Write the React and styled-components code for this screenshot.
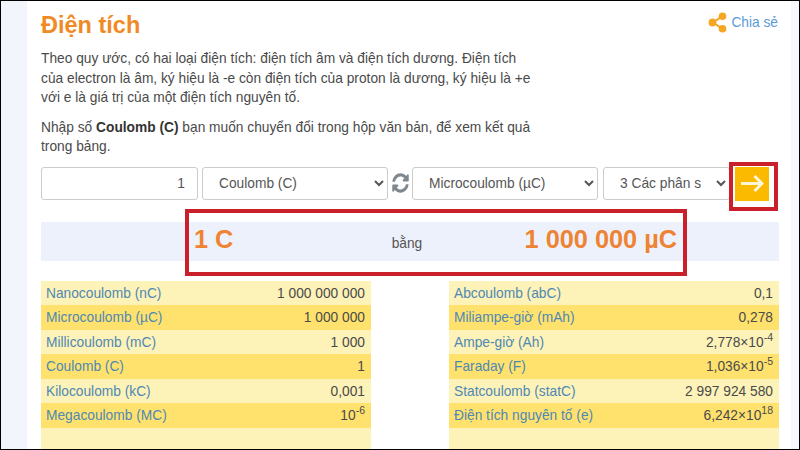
import React from 'react';
import styled, { createGlobalStyle } from 'styled-components';
import { FaSyncAlt } from 'react-icons/fa';

const GlobalStyle = createGlobalStyle`
  html, body {
    margin: 0;
    padding: 0;
    background: #fff;
  }
  body {
    font-family: "Liberation Sans", Arial, sans-serif;
  }
`;

const leftRows = [
  ['Nanocoulomb (nC)', '1 000 000 000'],
  ['Microcoulomb (µC)', '1 000 000'],
  ['Millicoulomb (mC)', '1 000'],
  ['Coulomb (C)', '1'],
  ['Kilocoulomb (kC)', '0,001'],
  ['Megacoulomb (MC)', <>10<sup>-6</sup></>],
];

const rightRows = [
  ['Abcoulomb (abC)', '0,1'],
  ['Miliampe-giờ (mAh)', '0,278'],
  ['Ampe-giờ (Ah)', <>2,778×10<sup>-4</sup></>],
  ['Faraday (F)', <>1,036×10<sup>-5</sup></>],
  ['Statcoulomb (statC)', '2 997 924 580'],
  ['Điện tích nguyên tố (e)', <>6,242×10<sup>18</sup></>],
];

function ShareIcon() {
  return (
    <svg width="19" height="21" viewBox="0 0 19 21">
      <path d="M5 10.5 L14.5 4.2 M5 10.5 L14.5 16.8" stroke="#f5a623" strokeWidth="2" />
      <circle cx="4.5" cy="10.5" r="3.9" fill="#f5a623" />
      <circle cx="14.5" cy="4.2" r="3.8" fill="#f5a623" />
      <circle cx="14.5" cy="16.8" r="3.8" fill="#f5a623" />
    </svg>
  );
}

function ArrowIcon() {
  return (
    <svg width="23" height="17" viewBox="0 0 23 17" fill="none" stroke="#fff6d6" strokeWidth="3">
      <path d="M0 8.5 H21" />
      <path d="M13.5 1 L21 8.5 L13.5 16" />
    </svg>
  );
}

function UnitTable({ rows }) {
  return (
    <Table>
      {rows.map(([name, value]) => (
        <Row key={name}>
          <UnitName>{name}</UnitName>
          <UnitValue>{value}</UnitValue>
        </Row>
      ))}
      <Filler />
    </Table>
  );
}

export default function App() {
  return (
    <>
      <GlobalStyle />
      <Frame>
        <Gutter />
        <Content>
          <Header>
            <Title>Điện tích</Title>
            <ShareLink>
              <ShareIcon />
              Chia sẻ
            </ShareLink>
          </Header>
          <Paragraph>
            Theo quy ước, có hai loại điện tích: điện tích âm và điện tích dương. Điện tích<br />
            của electron là âm, ký hiệu là -e còn điện tích của proton là dương, ký hiệu là +e<br />
            với e là giá trị của một điện tích nguyên tố.
          </Paragraph>
          <Paragraph>
            Nhập số <b>Coulomb (C)</b> bạn muốn chuyển đổi trong hộp văn bản, để xem kết quả<br />
            trong bảng.
          </Paragraph>
          <Controls>
            <NumberInput defaultValue="1" />
            <Select $width={186}>
              <option>Coulomb (C)</option>
            </Select>
            <SwapButton>
              <SwapIcon preserveAspectRatio="none" />
            </SwapButton>
            <Select $width={186}>
              <option>Microcoulomb (µC)</option>
            </Select>
            <Select $width={127}>
              <option>3 Các phân số</option>
            </Select>
            <GoButton>
              <ArrowIcon />
            </GoButton>
          </Controls>
          <ResultBar>
            <ResultValue>1 C</ResultValue>
            <ResultWord>bằng</ResultWord>
            <ResultValue>1 000 000 µC</ResultValue>
          </ResultBar>
          <Tables>
            <UnitTable rows={leftRows} />
            <UnitTable rows={rightRows} />
          </Tables>
        </Content>
        <RightGutter />
        <ResultHighlight />
        <ButtonHighlight />
      </Frame>
    </>
  );
}

const Frame = styled.div`
  position: relative;
  box-sizing: border-box;
  display: flex;
  width: 800px;
  height: 450px;
  overflow: hidden;
  border: 1px solid #000;
  background: #fff;
`;

const Gutter = styled.div`
  flex: 0 0 26px;
  background: #f3f5fd;
`;

const RightGutter = styled.div`
  flex: 0 0 8px;
  margin-left: auto;
  background: #f7f8fe;
`;

const Content = styled.main`
  flex: 0 0 738px;
  margin-left: 14px;
  color: #4a4a4a;
`;

const Header = styled.header`
  display: flex;
  justify-content: space-between;
  align-items: flex-start;
  height: 48px;
  padding: 11px 1px 0 0;
  box-sizing: border-box;
`;

const Title = styled.h1`
  margin: -1px 0 0;
  font-size: 23.5px;
  line-height: 28px;
  font-weight: 700;
  color: #f08a24;
`;

const ShareLink = styled.a`
  display: flex;
  align-items: center;
  gap: 4px;
  font-size: 13.75px;
  line-height: 21px;
  color: #5b9bd5;
`;

const Paragraph = styled.p`
  margin: 0 0 10px;
  font-size: 13.75px;
  line-height: 19.6px;
  color: #4a4a4a;

  b {
    color: #333;
  }
`;

const Controls = styled.div`
  display: flex;
  align-items: flex-start;
  height: 33px;
  margin-top: 10px;
`;

const fieldBox = `
  box-sizing: border-box;
  height: 33px;
  border: 1px solid #ccc;
  border-radius: 3px;
  background: #fff;
  font-family: "Liberation Sans", Arial, sans-serif;
  font-size: 13.75px;
  color: #555;
`;

const NumberInput = styled.input`
  ${fieldBox}
  width: 157px;
  margin-right: 4px;
  padding: 0 12px;
  text-align: right;
`;

const Select = styled.select`
  ${fieldBox}
  width: ${(props) => props.$width}px;
  margin-right: 5px;
  padding: 0 12px;
`;

const SwapButton = styled.span`
  display: flex;
  justify-content: center;
  align-items: center;
  width: 24px;
  height: 33px;
  margin-left: -5px;
`;

const SwapIcon = styled(FaSyncAlt)`
  width: 17px;
  height: 20px;
  color: #7f878e;
`;

const GoButton = styled.button`
  display: flex;
  align-items: center;
  justify-content: center;
  width: 34px;
  height: 34px;
  padding: 0;
  border: none;
  background: #fbb900;
`;

const ResultBar = styled.div`
  display: flex;
  align-items: center;
  justify-content: space-between;
  height: 39px;
  margin-top: 22px;
  padding: 0 102px 0 153px;
  background: #edf1fb;
`;

const ResultValue = styled.span`
  margin-top: -4px;
  font-size: 25.3px;
  font-weight: 700;
  color: #ee8433;
`;

const ResultWord = styled.span`
  margin: 5px 0 0 56px;
  font-size: 13.75px;
  color: #555;
`;

const Tables = styled.div`
  display: flex;
  justify-content: space-between;
  margin-top: 20px;
`;

const Table = styled.div`
  width: 330px;
`;

const Row = styled.div`
  display: flex;
  justify-content: space-between;
  align-items: center;
  height: 24.5px;
  padding: 0 6px 0 5px;
  background: #fdf2b8;
  font-size: 13.75px;

  &:nth-child(even) {
    background: #ffe26e;
  }
`;

const UnitName = styled.span`
  color: #4f88b4;
`;

const UnitValue = styled.span`
  color: #4a4a4a;

  sup {
    font-size: 10.5px;
    line-height: 0;
  }
`;

const Filler = styled.div`
  height: 30px;
  background: #fdf2b8;
`;

const ResultHighlight = styled.div`
  position: absolute;
  left: 184px;
  top: 208px;
  box-sizing: border-box;
  width: 502px;
  height: 67px;
  border: 4px solid #c9202c;
`;

const ButtonHighlight = styled.div`
  position: absolute;
  left: 728px;
  top: 161px;
  box-sizing: border-box;
  width: 49px;
  height: 49px;
  border: 4px solid #c9202c;
`;
